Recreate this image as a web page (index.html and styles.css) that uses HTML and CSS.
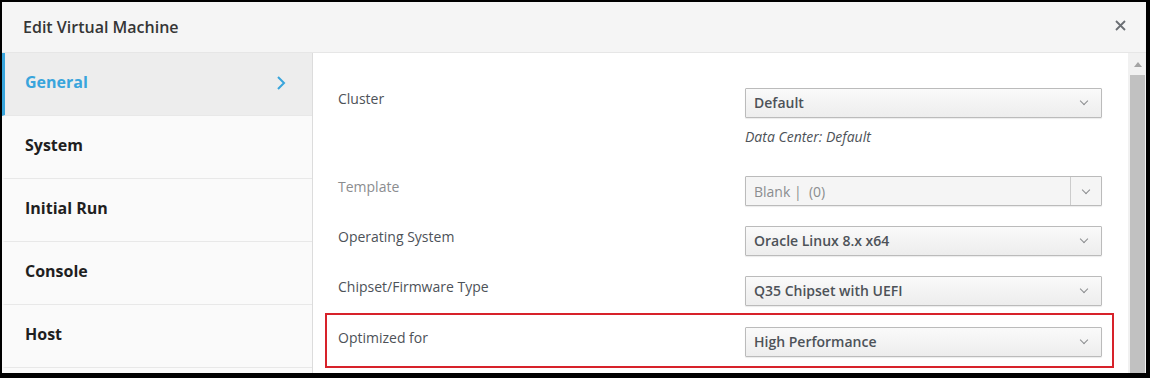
FILE: index.html
```html
<!DOCTYPE html>
<html lang="en">
<head>
    <meta charset="UTF-8">
    <title>Edit Virtual Machine</title>
    <link rel="stylesheet" href="styles.css">
</head>
<body>
    <div class="dialog">
        <!-- Header -->
        <div class="header">
            <span class="title">Edit Virtual Machine</span>
            <svg class="close" width="11" height="11" viewBox="0 0 11 11"><path d="M1 1 L10 10 M10 1 L1 10" stroke="#6a6e73" stroke-width="1.8"/></svg>
        </div>

        <div class="main">
            <!-- Menu laterale -->
            <div class="sidebar">
                <div class="tab active">
                    <span>General</span>
                    <svg class="chev" width="10" height="16" viewBox="0 0 10 16"><path d="M2 2 L8 8 L2 14" fill="none" stroke="#39a5dc" stroke-width="2"/></svg>
                </div>
                <div class="tab">System</div>
                <div class="tab">Initial Run</div>
                <div class="tab">Console</div>
                <div class="tab">Host</div>
                <div class="tab"></div>
            </div>

            <!-- Form -->
            <div class="content">
                <div class="row">
                    <div class="label">Cluster</div>
                    <div class="field">
                        <div class="select"><span>Default</span><i class="caret"></i></div>
                        <div class="help">Data Center: Default</div>
                    </div>
                </div>
                <div class="row">
                    <div class="label disabled">Template</div>
                    <div class="field">
                        <div class="select locked"><span>Blank |&nbsp; (0)</span><span class="btn"><i class="caret"></i></span></div>
                    </div>
                </div>
                <div class="row">
                    <div class="label">Operating System</div>
                    <div class="field">
                        <div class="select"><span>Oracle Linux 8.x x64</span><i class="caret"></i></div>
                    </div>
                </div>
                <div class="row">
                    <div class="label">Chipset/Firmware Type</div>
                    <div class="field">
                        <div class="select"><span>Q35 Chipset with UEFI</span><i class="caret"></i></div>
                    </div>
                </div>
                <div class="row highlight">
                    <div class="label">Optimized for</div>
                    <div class="field">
                        <div class="select"><span>High Performance</span><i class="caret"></i></div>
                    </div>
                </div>
            </div>

            <!-- Scrollbar -->
            <div class="scrollbar">
                <div class="arrow"></div>
                <div class="thumb"></div>
            </div>
        </div>
    </div>
</body>
</html>
```

FILE: styles.css
```css
* { margin: 0; padding: 0; box-sizing: border-box; }

body {
    background: #000;
    font-family: 'Open Sans', sans-serif;
    color: #363636;
    width: 1150px;
    height: 378px;
    overflow: hidden;
    padding: 2px 4px 5px 2px;
}

.dialog {
    width: 1144px;
    height: 371px;
    background: #fff;
    display: flex;
    flex-direction: column;
    overflow: hidden;
}

/* Header */
.header {
    height: 51px;
    flex-shrink: 0;
    background: #f5f5f5;
    border-bottom: 1px solid #e6e6e6;
    display: flex;
    align-items: center;
    justify-content: space-between;
    padding: 0 20px 0 21px;
}

.title {
    font-size: 16px;
    font-weight: 600;
    color: #363636;
}

.close {
    margin-top: -4px;
}

.main {
    flex: 1;
    display: flex;
    min-height: 0;
}

/* Menu laterale */
.sidebar {
    width: 311px;
    flex-shrink: 0;
    background: #fafafa;
    border-right: 1px solid #dcdcdc;
}

.tab {
    height: 63px;
    border-bottom: 1px solid #e8e8e8;
    padding: 17px 26px 0 20px;
    font-size: 16px;
    font-weight: 700;
    line-height: 24px;
    color: #1f1f1f;
    display: flex;
    justify-content: space-between;
    border-left: 3px solid transparent;
}

.tab.active {
    background: #ededed;
    color: #39a5dc;
    border-left-color: #39a5dc;
}

.chev {
    margin-top: 5px;
}

/* Form */
.content {
    flex: 1;
    padding: 35px 26px 0 25px;
}

.row {
    display: grid;
    grid-template-columns: 407px 357px;
    margin-bottom: 20px;
}

.label {
    font-size: 14px;
    line-height: 20px;
    color: #4d5258;
    padding-top: 1px;
}

.label.disabled {
    color: #8b8d8f;
}

.select {
    height: 30px;
    border: 1px solid #bbbbbb;
    border-radius: 1px;
    background: linear-gradient(#fafafa, #ededed);
    box-shadow: 0 1px 1px rgba(3, 3, 3, 0.08);
    display: flex;
    align-items: center;
    justify-content: space-between;
    padding: 0 14px 1px 8px;
    font-size: 14px;
    font-weight: 600;
    color: #4d5258;
}

.caret {
    width: 6px;
    height: 6px;
    border-right: 1px solid #8b8d8f;
    border-bottom: 1px solid #8b8d8f;
    transform: rotate(45deg);
    margin-top: -3px;
}

.select.locked {
    background: #f5f5f5;
    font-weight: 400;
    color: #8b8d8f;
    padding-right: 0;
    padding-bottom: 0;
}

.select .btn {
    width: 31px;
    height: 28px;
    border-left: 1px solid #cccccc;
    display: flex;
    align-items: center;
    justify-content: center;
}

.help {
    font-size: 14px;
    font-style: italic;
    line-height: 20px;
    color: #4d5258;
    margin-top: 9px;
    margin-bottom: 9px;
}

/* Riga evidenziata */
.row.highlight {
    margin: -13px -12px 0 -13px;
    padding: 12px 10px 9px 11px;
    border: 2px solid #d7222a;
}

/* Scrollbar */
.scrollbar {
    width: 18px;
    flex-shrink: 0;
    background: #f1f1f1;
    padding: 0 1px 0 2px;
    display: flex;
    flex-direction: column;
    align-items: center;
}

.arrow {
    margin-top: 9px;
    width: 0;
    height: 0;
    border-left: 4px solid transparent;
    border-right: 4px solid transparent;
    border-bottom: 5px solid #a3a3a3;
}

.thumb {
    margin-top: 8px;
    width: 100%;
    flex: 1;
    background: #c1c1c1;
}
```
